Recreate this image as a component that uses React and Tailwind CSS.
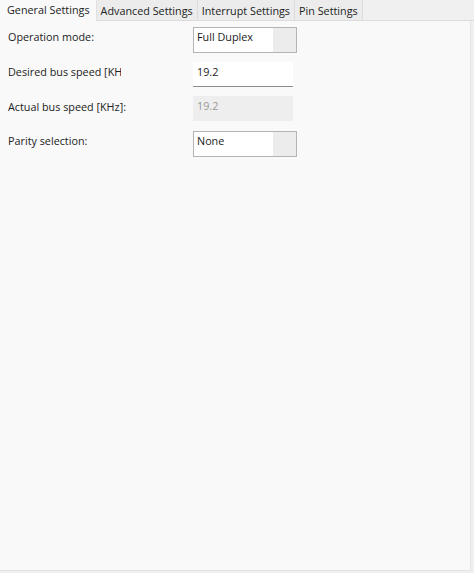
import React from 'react';

const tabs = ['General Settings', 'Advanced Settings', 'Interrupt Settings', 'Pin Settings'];

function Select({ value }) {
  return (
    <div className="flex h-[26px] w-[104px] border border-[#b4b4b4] bg-white">
      <div className="flex-1 pl-[3px] pt-[1px] text-[#1a1a1a]">{value}</div>
      <div className="w-[23px] bg-[#ececec]" />
    </div>
  );
}

export default function App() {
  return (
    <div
      className="w-[474px] h-[573px] bg-[#f0f0f0] flex flex-col text-[10.8px] leading-[16px] text-[#222]"
      style={{ fontFamily: '"Open Sans", "Noto Sans", sans-serif' }}
    >
      {/* Tab strip */}
      <div className="flex h-[21px] shrink-0">
        {tabs.map((t, i) => (
          <div
            key={t}
            className={
              i === 0
                ? 'pl-[7px] pr-[6px] pt-[2px] bg-[#f9f9f9] border-r border-[#e0e0e0]'
                : 'px-[4px] pt-[3px] bg-[#ececec] border-r border-b border-[#dcdcdc]'
            }
          >
            {t}
          </div>
        ))}
        <div className="flex-1 border-b border-[#dcdcdc]" />
      </div>

      {/* Panel */}
      <div className="flex-1 mr-[3px] mb-[2px] bg-[#f9f9f9] border-r border-b border-[#e4e4e4] pl-[8px] pt-[6px] flex flex-col">
        <div className="flex items-start h-[26px]">
          <div className="w-[185px] pt-[2px]">Operation mode:</div>
          <Select value="Full Duplex" />
        </div>
        <div className="flex items-start h-[26px] mt-[9px]">
          <div className="w-[113px] pt-[2px] overflow-hidden whitespace-nowrap">Desired bus speed [KHz]:</div>
          <div className="w-[72px]" />
          <div className="h-[25px] w-[100px] bg-white border-b border-[#8a8a8a] pl-[4px] pt-[2px] text-[#1a1a1a]">19.2</div>
        </div>
        <div className="flex items-start h-[26px] mt-[8px]">
          <div className="w-[185px] pt-[3px]">Actual bus speed [KHz]:</div>
          <div className="h-[25px] w-[100px] bg-[#eeeeee] pl-[4px] pt-[2px] text-[#9a9a9a]">19.2</div>
        </div>
        <div className="flex items-start h-[26px] mt-[9px]">
          <div className="w-[185px] pt-[2px]">Parity selection:</div>
          <Select value="None" />
        </div>
      </div>
    </div>
  );
}
